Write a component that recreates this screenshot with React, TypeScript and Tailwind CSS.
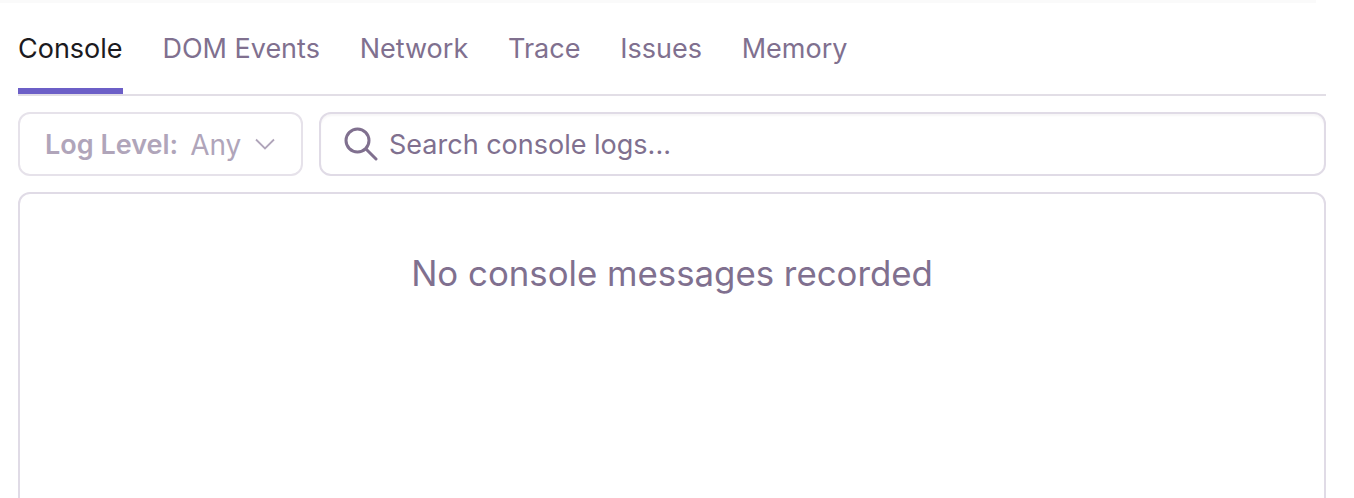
import { FC } from "react";

const tabs = ["Console", "DOM Events", "Network", "Trace", "Issues", "Memory"];

const Tab: FC<{ label: string; active: boolean }> = ({ label, active }) => {
  return (
    <div
      className={`h-[76px] pt-[14px] text-[27px] leading-[34px] border-b-[6px] ${
        active ? "text-[#1b1a20] border-[#6c5fc7]" : "text-[#80708f] border-transparent"
      }`}
    >
      {label}
    </div>
  );
};

export default function App() {
  return (
    <div className="h-[498px] w-[1354px] overflow-hidden bg-white font-['Inter',sans-serif]">
      <div className="h-[3px] w-[1316px] bg-[#fafafa]" />
      <div className="flex flex-col px-[18px] w-[1344px] mt-[15px]">
        {/* Tabs */}
        <div className="flex gap-[39.8px] border-b-2 border-[#e2dee6]">
          {tabs.map((tab, i) => (
            <Tab key={tab} label={tab} active={i === 0} />
          ))}
        </div>

        {/* Filters */}
        <div className="flex gap-4 mt-4">
          <div className="w-[285px] h-16 flex items-center pl-[25px] rounded-xl border-2 border-[#e6e2ea] text-[27px] text-[#b0a5ba] bg-white">
            <span className="font-semibold pt-[2px]">Log Level:</span>
            <span className="ml-3 pt-[2px] text-[28px]">Any</span>
            <svg className="ml-[14px]" width="20" height="12" viewBox="0 0 20 12" fill="none">
              <path d="M1 1.5L10 10.5L19 1.5" stroke="#b0a5ba" strokeWidth="1.8" />
            </svg>
          </div>
          <div className="flex-1 h-16 flex items-center pl-[23px] rounded-xl border-2 border-[#e0dbe6] text-[27px] text-[#80708f] shadow-[inset_0_2px_2px_rgba(43,34,51,0.04)]">
            <svg width="34" height="34" viewBox="0 0 34 34" fill="none">
              <circle cx="13.5" cy="13.5" r="11.5" stroke="#80708f" strokeWidth="3" />
              <path d="M22 22L32 32" stroke="#80708f" strokeWidth="3" strokeLinecap="round" />
            </svg>
            <span className="ml-[11px] pt-[2px]">Search console logs...</span>
          </div>
        </div>

        {/* Log panel */}
        <div className="mt-4 h-[400px] rounded-xl border-2 border-[#e0dbe6] pt-[55px] text-center text-[34.8px] leading-[48px] text-[#80708f]">
          No console messages recorded
        </div>
      </div>
    </div>
  );
}
